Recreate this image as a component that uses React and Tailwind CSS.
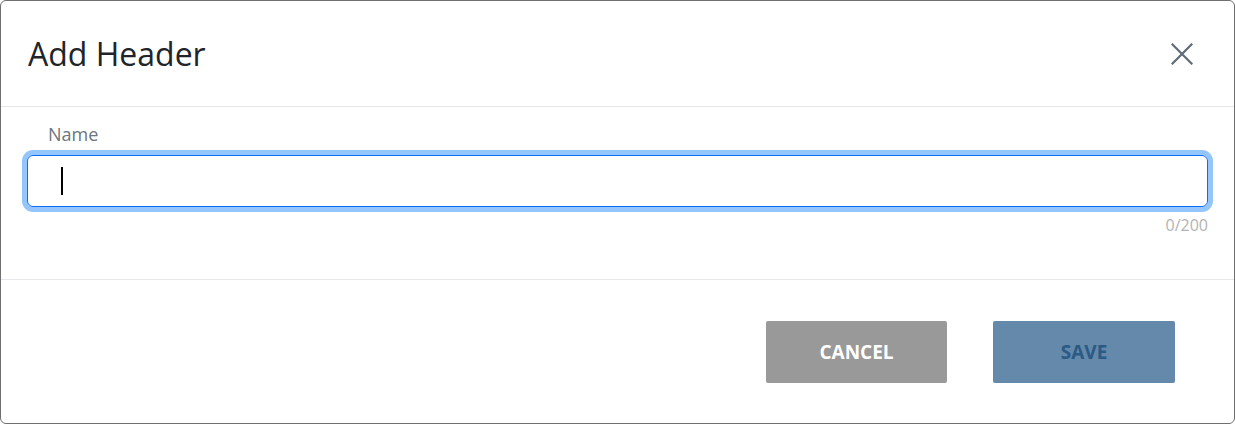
export default function App() {
  return (
    <div className="w-[1235px] h-[424px] bg-white">
      <div
        className="w-[1235px] h-[424px] border border-[#6f6f6f] rounded-[6px] bg-white flex flex-col overflow-hidden"
        style={{ fontFamily: '"Open Sans", "Noto Sans", sans-serif' }}
      >
        <div className="h-[106px] shrink-0 flex items-center justify-between pl-[27px] pr-[40px] border-b border-[#e5e7ea]">
          <h1 className="text-[32px] leading-[40px] font-medium text-[#212529]">Add Header</h1>
          <button className="w-[24px] h-[24px] flex items-center justify-center text-[#5f6b78]">
            <svg width="22" height="22" viewBox="0 0 22 22" fill="none" stroke="currentColor" strokeWidth="2.2" strokeLinecap="square">
              <path d="M1.5 1.5 L20.5 20.5 M20.5 1.5 L1.5 20.5" />
            </svg>
          </button>
        </div>
        <div className="h-[173px] shrink-0 flex flex-col pt-[15px] px-[26px] border-b border-[#e5e7ea]">
          <label className="pl-[21px] text-[18px] leading-[24px] text-[#6c757d]">Name</label>
          <div className="mt-[9px] h-[52px] rounded-[6px] border border-[#0b6cf6] shadow-[0_0_0_5px_#94c6fd] flex items-center pl-[33px]">
            <span className="w-[2px] h-[28px] bg-black"></span>
          </div>
          <div className="mt-[7px] text-right text-[16px] leading-[22px] text-[#b3b3b3]">0/200</div>
        </div>
        <div className="flex-1 flex items-center justify-end gap-[46px] pr-[59px] pt-[1px]">
          <button className="w-[181px] h-[62px] rounded-[2px] bg-[#999999] text-white text-[19px] font-bold">CANCEL</button>
          <button className="w-[182px] h-[62px] rounded-[2px] bg-[#6489aa] text-[#2b5a85] text-[19px] font-bold">SAVE</button>
        </div>
      </div>
    </div>
  );
}
